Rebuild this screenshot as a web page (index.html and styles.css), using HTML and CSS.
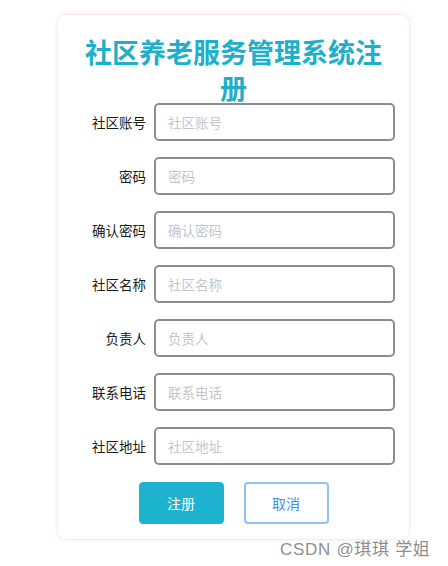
FILE: index.html
```html
<!DOCTYPE html>
<html lang="zh">
<head>
<meta charset="utf-8">
<link rel="stylesheet" href="styles.css">
</head>
<body>
<div class="card">
  <h1 class="title">社区养老服务管理系统注册</h1>
  <form class="form">
    <div class="row"><label class="label">社区账号</label><input class="input" placeholder="社区账号"></div>
    <div class="row"><label class="label">密码</label><input class="input" type="password" placeholder="密码"></div>
    <div class="row"><label class="label">确认密码</label><input class="input" type="password" placeholder="确认密码"></div>
    <div class="row"><label class="label">社区名称</label><input class="input" placeholder="社区名称"></div>
    <div class="row"><label class="label">负责人</label><input class="input" placeholder="负责人"></div>
    <div class="row"><label class="label">联系电话</label><input class="input" placeholder="联系电话"></div>
    <div class="row"><label class="label">社区地址</label><input class="input" placeholder="社区地址"></div>
    <div class="actions">
      <button type="button" class="btn btn-primary">注册</button>
      <button type="button" class="btn btn-plain">取消</button>
    </div>
  </form>
</div>
<div class="watermark">CSDN @琪琪 学姐</div>
</body>
</html>
```
FILE: styles.css
```css
html, body {
  margin: 0;
  padding: 0;
  background: #ffffff;
}
body {
  width: 448px;
  height: 566px;
  position: relative;
  overflow: hidden;
  font-family: "Noto Sans CJK SC", "Noto Sans", sans-serif;
  padding: 14px 0 0 57px;
  box-sizing: border-box;
}
.card {
  width: 353px;
  height: 526px;
  box-sizing: border-box;
  border: 1px solid #fbeaea;
  border-radius: 9px;
  box-shadow: 0 0 5px rgba(240, 200, 200, 0.35);
  padding-top: 19px;
}
.title {
  margin: 0 auto -3px;
  width: 314px;
  text-align: center;
  font-size: 27px;
  line-height: 36px;
  font-weight: 700;
  color: #1eafca;
}
.form {
  display: flex;
  flex-direction: column;
  gap: 16px;
}
.row {
  display: flex;
  align-items: center;
  gap: 8px;
}
.label {
  width: 88px;
  text-align: right;
  font-size: 13.5px;
  color: #1a1a1a;
}
.input {
  width: 241px;
  height: 38px;
  box-sizing: border-box;
  border: 2px solid #8d8d8d;
  border-radius: 5px;
  padding: 0 12px;
  font-family: inherit;
  font-size: 13.5px;
  color: #333;
  outline: none;
}
.input::placeholder {
  color: #c3c6cc;
}
.actions {
  display: flex;
  justify-content: center;
  gap: 20px;
  margin-top: 1px;
}
.btn {
  width: 85px;
  height: 42px;
  box-sizing: border-box;
  border-radius: 4px;
  font-family: inherit;
  font-size: 14px;
  cursor: pointer;
}
.btn-primary {
  background: #1db3cf;
  border: 1px solid #1db3cf;
  color: #ffffff;
}
.btn-plain {
  background: #ffffff;
  border: 2px solid #8fc1f3;
  color: #3f8fe6;
}
.watermark {
  position: absolute;
  left: 280px;
  top: 535px;
  font-family: "Liberation Sans", "Noto Sans CJK SC", sans-serif;
  font-size: 17px;
  letter-spacing: 0.7px;
  color: #8f8f8f;
}
```
